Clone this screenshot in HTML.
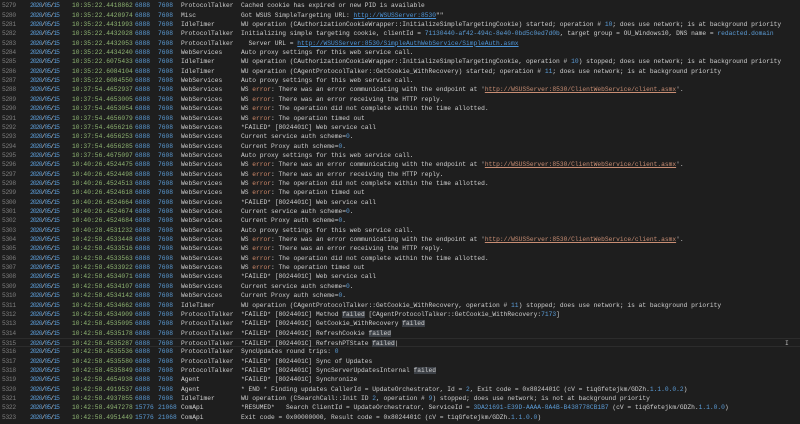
<!DOCTYPE html>
<html><head><meta charset="utf-8"><style>
html,body{margin:0;padding:0;background:#1e1e1e;width:800px;height:424px;overflow:hidden}
body{font-family:"Liberation Mono",monospace;font-size:6.25px;color:#cfcfcf;position:relative}
.r{position:absolute;left:0;width:800px;height:9.35px;line-height:9.35px;white-space:pre}
.r span{position:absolute;top:0}
.n{left:2px;color:#7d7d7d;letter-spacing:-0.3px}
.d{left:30px;color:#5b9bd5;letter-spacing:-0.85px}
.d i{color:#d0d0d0;font-style:normal}
.t{left:72px;color:#8fb573;letter-spacing:0.05px}
.p{left:135px;color:#5b9bd5}
.h{left:158px;color:#5b9bd5}
.c{left:181px;color:#d0d0d0}
.m{left:241px}
b{font-weight:normal;color:#5b9bd5}
.e{color:#d08a6a}
.u{color:#4d95d9;text-decoration:underline}
.ru{color:#c98e74;text-decoration:underline}
.f{background:#3b3f45}
.cur{border-top:1px solid #2c2c2c;border-bottom:1px solid #2c2c2c;box-sizing:border-box}
</style></head><body>
<div class="r" style="top:1.3px"><span class="n">5279</span><span class="d">2020<i>/</i>05<i>/</i>15</span><span class="t">10:35:22.4418862</span><span class="p">6888</span><span class="h">7608</span><span class="c">ProtocolTalker</span><span class="m">Cached cookie has expired or new PID is available</span></div>
<div class="r" style="top:10.65px"><span class="n">5280</span><span class="d">2020<i>/</i>05<i>/</i>15</span><span class="t">10:35:22.4420974</span><span class="p">6888</span><span class="h">7608</span><span class="c">Misc</span><span class="m">Got WSUS SimpleTargeting URL: <u class="u">http://WSUSServer:8530</u>""</span></div>
<div class="r" style="top:20.0px"><span class="n">5281</span><span class="d">2020<i>/</i>05<i>/</i>15</span><span class="t">10:35:22.4431993</span><span class="p">6888</span><span class="h">7608</span><span class="c">IdleTimer</span><span class="m">WU operation (CAuthorizationCookieWrapper::InitializeSimpleTargetingCookie) started; operation # <b>10</b>; does use network; is at background priority</span></div>
<div class="r" style="top:29.35px"><span class="n">5282</span><span class="d">2020<i>/</i>05<i>/</i>15</span><span class="t">10:35:22.4432028</span><span class="p">6888</span><span class="h">7608</span><span class="c">ProtocolTalker</span><span class="m">Initializing simple targeting cookie, clientId = <b>71130440-af42-494c-8e40-0bd5c0ed7d0b</b>, target group = OU_Windows10, DNS name = <b>redacted.domain</b></span></div>
<div class="r" style="top:38.7px"><span class="n">5283</span><span class="d">2020<i>/</i>05<i>/</i>15</span><span class="t">10:35:22.4432053</span><span class="p">6888</span><span class="h">7608</span><span class="c">ProtocolTalker</span><span class="m">  Server URL = <u class="u">http://WSUSServer:8530/SimpleAuthWebService/SimpleAuth.asmx</u></span></div>
<div class="r" style="top:48.05px"><span class="n">5284</span><span class="d">2020<i>/</i>05<i>/</i>15</span><span class="t">10:35:22.4434240</span><span class="p">6888</span><span class="h">7608</span><span class="c">WebServices</span><span class="m">Auto proxy settings for this web service call.</span></div>
<div class="r" style="top:57.4px"><span class="n">5285</span><span class="d">2020<i>/</i>05<i>/</i>15</span><span class="t">10:35:22.6075433</span><span class="p">6888</span><span class="h">7608</span><span class="c">IdleTimer</span><span class="m">WU operation (CAuthorizationCookieWrapper::InitializeSimpleTargetingCookie, operation # <b>10</b>) stopped; does use network; is at background priority</span></div>
<div class="r" style="top:66.75px"><span class="n">5286</span><span class="d">2020<i>/</i>05<i>/</i>15</span><span class="t">10:35:22.6084104</span><span class="p">6888</span><span class="h">7608</span><span class="c">IdleTimer</span><span class="m">WU operation (CAgentProtocolTalker::GetCookie_WithRecovery) started; operation # <b>11</b>; does use network; is at background priority</span></div>
<div class="r" style="top:76.1px"><span class="n">5287</span><span class="d">2020<i>/</i>05<i>/</i>15</span><span class="t">10:35:22.6084550</span><span class="p">6888</span><span class="h">7608</span><span class="c">WebServices</span><span class="m">Auto proxy settings for this web service call.</span></div>
<div class="r" style="top:85.45px"><span class="n">5288</span><span class="d">2020<i>/</i>05<i>/</i>15</span><span class="t">10:37:54.4652937</span><span class="p">6888</span><span class="h">7608</span><span class="c">WebServices</span><span class="m">WS <span class="e" style="position:static">error</span>: There was an error communicating with the endpoint at '<u class="ru">http://WSUSServer:8530/ClientWebService/client.asmx</u>'.</span></div>
<div class="r" style="top:94.8px"><span class="n">5289</span><span class="d">2020<i>/</i>05<i>/</i>15</span><span class="t">10:37:54.4653005</span><span class="p">6888</span><span class="h">7608</span><span class="c">WebServices</span><span class="m">WS <span class="e" style="position:static">error</span>: There was an error receiving the HTTP reply.</span></div>
<div class="r" style="top:104.15px"><span class="n">5290</span><span class="d">2020<i>/</i>05<i>/</i>15</span><span class="t">10:37:54.4653054</span><span class="p">6888</span><span class="h">7608</span><span class="c">WebServices</span><span class="m">WS <span class="e" style="position:static">error</span>: The operation did not complete within the time allotted.</span></div>
<div class="r" style="top:113.5px"><span class="n">5291</span><span class="d">2020<i>/</i>05<i>/</i>15</span><span class="t">10:37:54.4656079</span><span class="p">6888</span><span class="h">7608</span><span class="c">WebServices</span><span class="m">WS <span class="e" style="position:static">error</span>: The operation timed out</span></div>
<div class="r" style="top:122.85px"><span class="n">5292</span><span class="d">2020<i>/</i>05<i>/</i>15</span><span class="t">10:37:54.4656216</span><span class="p">6888</span><span class="h">7608</span><span class="c">WebServices</span><span class="m">*FAILED* [8024401C] Web service call</span></div>
<div class="r" style="top:132.2px"><span class="n">5293</span><span class="d">2020<i>/</i>05<i>/</i>15</span><span class="t">10:37:54.4656253</span><span class="p">6888</span><span class="h">7608</span><span class="c">WebServices</span><span class="m">Current service auth scheme=<b>0</b>.</span></div>
<div class="r" style="top:141.55px"><span class="n">5294</span><span class="d">2020<i>/</i>05<i>/</i>15</span><span class="t">10:37:54.4656285</span><span class="p">6888</span><span class="h">7608</span><span class="c">WebServices</span><span class="m">Current Proxy auth scheme=<b>0</b>.</span></div>
<div class="r" style="top:150.9px"><span class="n">5295</span><span class="d">2020<i>/</i>05<i>/</i>15</span><span class="t">10:37:56.4675097</span><span class="p">6888</span><span class="h">7608</span><span class="c">WebServices</span><span class="m">Auto proxy settings for this web service call.</span></div>
<div class="r" style="top:160.25px"><span class="n">5296</span><span class="d">2020<i>/</i>05<i>/</i>15</span><span class="t">10:40:26.4524475</span><span class="p">6888</span><span class="h">7608</span><span class="c">WebServices</span><span class="m">WS <span class="e" style="position:static">error</span>: There was an error communicating with the endpoint at '<u class="ru">http://WSUSServer:8530/ClientWebService/client.asmx</u>'.</span></div>
<div class="r" style="top:169.6px"><span class="n">5297</span><span class="d">2020<i>/</i>05<i>/</i>15</span><span class="t">10:40:26.4524498</span><span class="p">6888</span><span class="h">7608</span><span class="c">WebServices</span><span class="m">WS <span class="e" style="position:static">error</span>: There was an error receiving the HTTP reply.</span></div>
<div class="r" style="top:178.95px"><span class="n">5298</span><span class="d">2020<i>/</i>05<i>/</i>15</span><span class="t">10:40:26.4524513</span><span class="p">6888</span><span class="h">7608</span><span class="c">WebServices</span><span class="m">WS <span class="e" style="position:static">error</span>: The operation did not complete within the time allotted.</span></div>
<div class="r" style="top:188.3px"><span class="n">5299</span><span class="d">2020<i>/</i>05<i>/</i>15</span><span class="t">10:40:26.4524618</span><span class="p">6888</span><span class="h">7608</span><span class="c">WebServices</span><span class="m">WS <span class="e" style="position:static">error</span>: The operation timed out</span></div>
<div class="r" style="top:197.65px"><span class="n">5300</span><span class="d">2020<i>/</i>05<i>/</i>15</span><span class="t">10:40:26.4524664</span><span class="p">6888</span><span class="h">7608</span><span class="c">WebServices</span><span class="m">*FAILED* [8024401C] Web service call</span></div>
<div class="r" style="top:207.0px"><span class="n">5301</span><span class="d">2020<i>/</i>05<i>/</i>15</span><span class="t">10:40:26.4524674</span><span class="p">6888</span><span class="h">7608</span><span class="c">WebServices</span><span class="m">Current service auth scheme=<b>0</b>.</span></div>
<div class="r" style="top:216.35px"><span class="n">5302</span><span class="d">2020<i>/</i>05<i>/</i>15</span><span class="t">10:40:26.4524684</span><span class="p">6888</span><span class="h">7608</span><span class="c">WebServices</span><span class="m">Current Proxy auth scheme=<b>0</b>.</span></div>
<div class="r" style="top:225.7px"><span class="n">5303</span><span class="d">2020<i>/</i>05<i>/</i>15</span><span class="t">10:40:28.4531232</span><span class="p">6888</span><span class="h">7608</span><span class="c">WebServices</span><span class="m">Auto proxy settings for this web service call.</span></div>
<div class="r" style="top:235.05px"><span class="n">5304</span><span class="d">2020<i>/</i>05<i>/</i>15</span><span class="t">10:42:58.4533448</span><span class="p">6888</span><span class="h">7608</span><span class="c">WebServices</span><span class="m">WS <span class="e" style="position:static">error</span>: There was an error communicating with the endpoint at '<u class="ru">http://WSUSServer:8530/ClientWebService/client.asmx</u>'.</span></div>
<div class="r" style="top:244.4px"><span class="n">5305</span><span class="d">2020<i>/</i>05<i>/</i>15</span><span class="t">10:42:58.4533516</span><span class="p">6888</span><span class="h">7608</span><span class="c">WebServices</span><span class="m">WS <span class="e" style="position:static">error</span>: There was an error receiving the HTTP reply.</span></div>
<div class="r" style="top:253.75px"><span class="n">5306</span><span class="d">2020<i>/</i>05<i>/</i>15</span><span class="t">10:42:58.4533563</span><span class="p">6888</span><span class="h">7608</span><span class="c">WebServices</span><span class="m">WS <span class="e" style="position:static">error</span>: The operation did not complete within the time allotted.</span></div>
<div class="r" style="top:263.1px"><span class="n">5307</span><span class="d">2020<i>/</i>05<i>/</i>15</span><span class="t">10:42:58.4533922</span><span class="p">6888</span><span class="h">7608</span><span class="c">WebServices</span><span class="m">WS <span class="e" style="position:static">error</span>: The operation timed out</span></div>
<div class="r" style="top:272.45px"><span class="n">5308</span><span class="d">2020<i>/</i>05<i>/</i>15</span><span class="t">10:42:58.4534071</span><span class="p">6888</span><span class="h">7608</span><span class="c">WebServices</span><span class="m">*FAILED* [8024401C] Web service call</span></div>
<div class="r" style="top:281.8px"><span class="n">5309</span><span class="d">2020<i>/</i>05<i>/</i>15</span><span class="t">10:42:58.4534107</span><span class="p">6888</span><span class="h">7608</span><span class="c">WebServices</span><span class="m">Current service auth scheme=<b>0</b>.</span></div>
<div class="r" style="top:291.15px"><span class="n">5310</span><span class="d">2020<i>/</i>05<i>/</i>15</span><span class="t">10:42:58.4534142</span><span class="p">6888</span><span class="h">7608</span><span class="c">WebServices</span><span class="m">Current Proxy auth scheme=<b>0</b>.</span></div>
<div class="r" style="top:300.5px"><span class="n">5311</span><span class="d">2020<i>/</i>05<i>/</i>15</span><span class="t">10:42:58.4534662</span><span class="p">6888</span><span class="h">7608</span><span class="c">IdleTimer</span><span class="m">WU operation (CAgentProtocolTalker::GetCookie_WithRecovery, operation # <b>11</b>) stopped; does use network; is at background priority</span></div>
<div class="r" style="top:309.85px"><span class="n">5312</span><span class="d">2020<i>/</i>05<i>/</i>15</span><span class="t">10:42:58.4534909</span><span class="p">6888</span><span class="h">7608</span><span class="c">ProtocolTalker</span><span class="m">*FAILED* [8024401C] Method <span class="f" style="position:static">failed</span> [CAgentProtocolTalker::GetCookie_WithRecovery:<b>7173</b>]</span></div>
<div class="r" style="top:319.2px"><span class="n">5313</span><span class="d">2020<i>/</i>05<i>/</i>15</span><span class="t">10:42:58.4535095</span><span class="p">6888</span><span class="h">7608</span><span class="c">ProtocolTalker</span><span class="m">*FAILED* [8024401C] GetCookie_WithRecovery <span class="f" style="position:static">failed</span></span></div>
<div class="r" style="top:328.55px"><span class="n">5314</span><span class="d">2020<i>/</i>05<i>/</i>15</span><span class="t">10:42:58.4535178</span><span class="p">6888</span><span class="h">7608</span><span class="c">ProtocolTalker</span><span class="m">*FAILED* [8024401C] RefreshCookie <span class="f" style="position:static">failed</span></span></div>
<div class="r cur" style="top:337.9px"><span class="n">5315</span><span class="d">2020<i>/</i>05<i>/</i>15</span><span class="t">10:42:58.4535287</span><span class="p">6888</span><span class="h">7608</span><span class="c">ProtocolTalker</span><span class="m">*FAILED* [8024401C] RefreshPTState <span class="f" style="position:static">failed</span>|</span><span style="left:785px;color:#bbb">I</span></div>
<div class="r" style="top:347.25px"><span class="n">5316</span><span class="d">2020<i>/</i>05<i>/</i>15</span><span class="t">10:42:58.4535536</span><span class="p">6888</span><span class="h">7608</span><span class="c">ProtocolTalker</span><span class="m">SyncUpdates round trips: <b>0</b></span></div>
<div class="r" style="top:356.6px"><span class="n">5317</span><span class="d">2020<i>/</i>05<i>/</i>15</span><span class="t">10:42:58.4535580</span><span class="p">6888</span><span class="h">7608</span><span class="c">ProtocolTalker</span><span class="m">*FAILED* [8024401C] Sync of Updates</span></div>
<div class="r" style="top:365.95px"><span class="n">5318</span><span class="d">2020<i>/</i>05<i>/</i>15</span><span class="t">10:42:58.4535849</span><span class="p">6888</span><span class="h">7608</span><span class="c">ProtocolTalker</span><span class="m">*FAILED* [8024401C] SyncServerUpdatesInternal <span class="f" style="position:static">failed</span></span></div>
<div class="r" style="top:375.3px"><span class="n">5319</span><span class="d">2020<i>/</i>05<i>/</i>15</span><span class="t">10:42:58.4654938</span><span class="p">6888</span><span class="h">7608</span><span class="c">Agent</span><span class="m">*FAILED* [8024401C] Synchronize</span></div>
<div class="r" style="top:384.65px"><span class="n">5320</span><span class="d">2020<i>/</i>05<i>/</i>15</span><span class="t">10:42:58.4919537</span><span class="p">6888</span><span class="h">7608</span><span class="c">Agent</span><span class="m">* END * Finding updates CallerId = UpdateOrchestrator, Id = <b>2</b>, Exit code = 0x8024401C (cV = tiqGfetejkm/GDZh.<b>1.1.0.0.2</b>)</span></div>
<div class="r" style="top:394.0px"><span class="n">5321</span><span class="d">2020<i>/</i>05<i>/</i>15</span><span class="t">10:42:58.4937855</span><span class="p">6888</span><span class="h">7608</span><span class="c">IdleTimer</span><span class="m">WU operation (CSearchCall::Init ID <b>2</b>, operation # <b>9</b>) stopped; does use network; is not at background priority</span></div>
<div class="r" style="top:403.35px"><span class="n">5322</span><span class="d">2020<i>/</i>05<i>/</i>15</span><span class="t">10:42:58.4947278</span><span class="p">15776</span><span class="h">21068</span><span class="c">ComApi</span><span class="m">*RESUMED*   Search ClientId = UpdateOrchestrator, ServiceId = <b>3DA21691-E39D-AAAA-8A4B-B438778CB1B7</b> (cV = tiqGfetejkm/GDZh.<b>1.1.0.0</b>)</span></div>
<div class="r" style="top:412.7px"><span class="n">5323</span><span class="d">2020<i>/</i>05<i>/</i>15</span><span class="t">10:42:58.4951449</span><span class="p">15776</span><span class="h">21068</span><span class="c">ComApi</span><span class="m">Exit code = 0x00000000, Result code = 0x8024401C (cV = tiqGfetejkm/GDZh.<b>1.1.0.0</b>)</span></div>
</body></html>
